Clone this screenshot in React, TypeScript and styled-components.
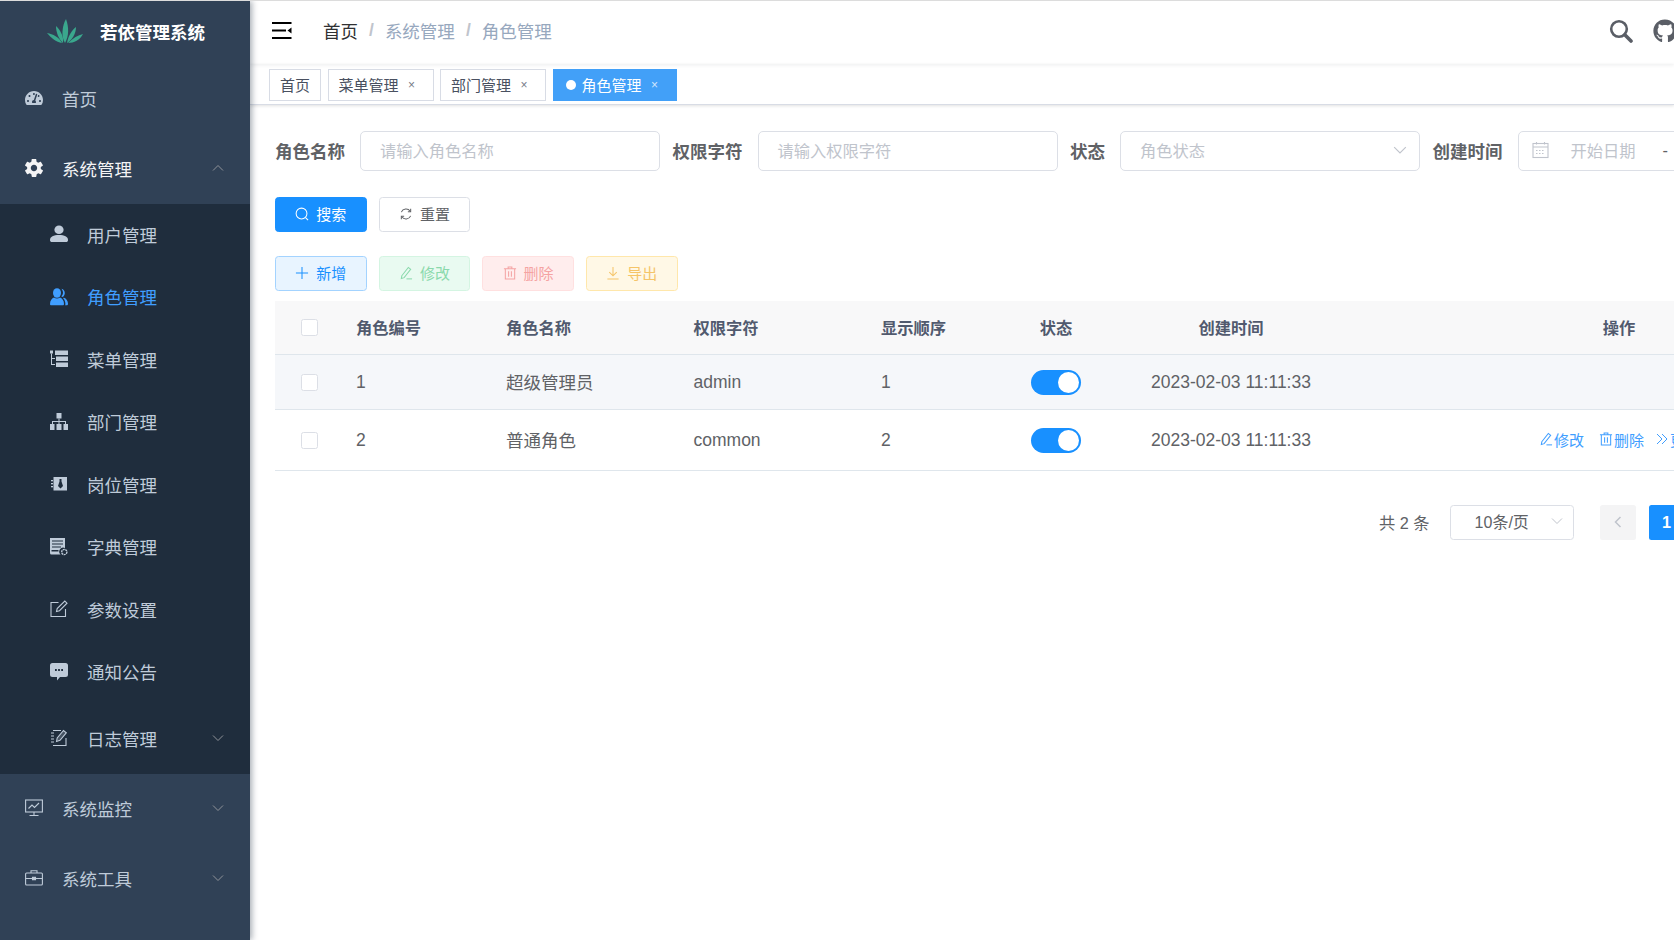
import React from "react";
import styled, { createGlobalStyle } from "styled-components";
import { FaTachometerAlt, FaGithub } from "react-icons/fa";
import { IoMdSettings } from "react-icons/io";

const GlobalStyle = createGlobalStyle`
  html, body {
    margin: 0;
    padding: 0;
    height: 100%;
    overflow: hidden;
    background: #fff;
    font-family: "Liberation Sans", "Noto Sans CJK SC", sans-serif;
  }
  * { box-sizing: border-box; }
`;

const Page = styled.div`
  display: flex;
  width: 1674px;
  height: 940px;
  overflow: hidden;
  border-top: 1px solid #dcdcdc;
`;

const Sidebar = styled.aside`
  width: 250px;
  flex: none;
  background: #304156;
  box-shadow: 2px 0 6px rgba(0, 21, 41, 0.35);
  position: relative;
  z-index: 3;
`;

const Logo = styled.div`
  height: 63px;
  display: flex;
  align-items: center;
  padding: 0 0 3px 47px;
  gap: 17px;
  color: #fff;
  font-size: 17.5px;
  font-weight: 700;
`;

const MenuRow = styled.div<{ $tall?: boolean; $sub?: boolean; $color?: string }>`
  height: ${(p) => (p.$tall ? "70px" : "62.5px")};
  display: flex;
  align-items: center;
  padding: 0 26px 2px ${(p) => (p.$sub ? "50px" : "25px")};
  font-size: 17.5px;
  color: ${(p) => p.$color || "#bfcbd9"};
`;

const MenuIcon = styled.span`
  width: 18px;
  height: 18px;
  flex: none;
  margin-right: 19px;
  display: flex;
  align-items: center;
  justify-content: center;
  color: inherit;
  svg { display: block; flex: none; }
`;

const MenuText = styled.span`
  flex: 1;
`;

const SubMenu = styled.div`
  background: #1f2d3d;
`;

const Main = styled.main`
  flex: 1;
  min-width: 0;
  overflow: hidden;
  display: flex;
  flex-direction: column;
`;

const Navbar = styled.header`
  height: 63px;
  flex: none;
  display: flex;
  align-items: center;
  padding: 0 0 4px 22px;
  box-shadow: 0 1px 4px rgba(0, 21, 41, 0.08);
  position: relative;
  z-index: 1;
`;

const Crumbs = styled.nav`
  display: flex;
  align-items: center;
  margin-left: 31px;
  font-size: 17.5px;
  color: #97a8be;
  flex: 1;
`;

const CrumbHome = styled.span`
  color: #303133;
`;

const CrumbSep = styled.span`
  color: #c0c4cc;
  font-weight: 700;
  margin: 0 11px;
`;

const NavTools = styled.div`
  display: flex;
  align-items: center;
  gap: 20px;
  color: #5a5e66;
  margin-right: -3px;
  svg { display: block; flex: none; }
`;

const TagsBar = styled.div`
  height: 41px;
  flex: none;
  display: flex;
  align-items: flex-start;
  gap: 6.5px;
  padding: 5px 0 0 19px;
  border-bottom: 1px solid #d8dce5;
  box-shadow: 0 1px 3px rgba(0, 0, 0, 0.12);
`;

const Tag = styled.div<{ $active?: boolean }>`
  height: 32px;
  display: flex;
  align-items: center;
  padding: 0 10px 1px ${(p) => (p.$active ? "12px" : "10px")};
  font-size: 15px;
  border: 1px solid ${(p) => (p.$active ? "#42a0f8" : "#d8dce5")};
  background: ${(p) => (p.$active ? "#42a0f8" : "#fff")};
  color: ${(p) => (p.$active ? "#fff" : "#495060")};
`;

const TagDot = styled.i`
  width: 10px;
  height: 10px;
  border-radius: 50%;
  background: #fff;
  margin-right: 6px;
`;

const TagClose = styled.span`
  font-size: 12px;
  margin: 0 5px 0 7px;
  width: 12px;
  text-align: center;
  opacity: 0.75;
`;

const Content = styled.section`
  padding: 26px 0 0 25px;
`;

const FilterRow = styled.div`
  display: flex;
  align-items: center;
  height: 40px;
`;

const FilterLabel = styled.label`
  font-size: 17.5px;
  font-weight: 700;
  color: #606266;
  white-space: nowrap;
  margin-right: 15px;
  padding-bottom: 2px;
`;

const FilterBox = styled.div<{ $width: number }>`
  width: ${(p) => p.$width}px;
  height: 40px;
  flex: none;
  display: flex;
  align-items: center;
  justify-content: space-between;
  padding: 0 19px 2px;
  margin-right: 12.5px;
  border: 1px solid #dcdfe6;
  border-radius: 5px;
  font-size: 16.25px;
  color: #c0c4cc;
`;

const SelectBox = styled(FilterBox)`
  padding-right: 12px;
`;

const DateBox = styled(FilterBox)`
  justify-content: flex-start;
  padding-left: 13px;
`;

const DateText = styled.span`
  margin-left: 22px;
`;

const DateDash = styled.span`
  margin-left: 27px;
  color: #606266;
`;

const ButtonRow = styled.div<{ $top: number }>`
  display: flex;
  gap: 12.2px;
  margin-top: ${(p) => p.$top}px;
`;

const palette = {
  primary: { bg: "#1890ff", border: "#1890ff", color: "#fff" },
  ghost: { bg: "#fff", border: "#dcdfe6", color: "#606266" },
  add: { bg: "#e8f4ff", border: "#a3d3ff", color: "#1890ff" },
  edit: { bg: "#e9faf1", border: "#d4f5e2", color: "#8ad9ac" },
  remove: { bg: "#ffeded", border: "#ffe0e0", color: "#f5a3a3" },
  exportFile: { bg: "#fff8e6", border: "#ffe7ab", color: "#f5c468" },
};

const Button = styled.div<{ $kind: keyof typeof palette }>`
  width: 91.5px;
  height: 35px;
  display: flex;
  align-items: center;
  justify-content: center;
  gap: 7px;
  padding-bottom: 2px;
  font-size: 15px;
  border-radius: 3.5px;
  border: 1px solid ${(p) => palette[p.$kind].border};
  background: ${(p) => palette[p.$kind].bg};
  color: ${(p) => palette[p.$kind].color};
  svg { flex: none; }
`;

const RoleTable = styled.table`
  width: 1632px;
  margin-top: 10px;
  border-collapse: collapse;
  table-layout: fixed;
`;

const HeadCell = styled.th<{ $center?: boolean }>`
  height: 53px;
  padding: 0 12.5px;
  background: #f8f8f9;
  border-bottom: 1px solid #dfe6ec;
  font-size: 16.25px;
  font-weight: 700;
  color: #515a6e;
  text-align: ${(p) => (p.$center ? "center" : "left")};
`;

const BodyRow = styled.tr<{ $height: number; $hover?: boolean }>`
  height: ${(p) => p.$height}px;
  background: ${(p) => (p.$hover ? "#f5f7fa" : "#fff")};
`;

// latin digits sit about a pixel lower in the reference than the cjk text
const Cell = styled.td<{ $center?: boolean; $latin?: boolean }>`
  padding: ${(p) => (p.$latin ? "2px 12.5px 0" : "0 12.5px 1px")};
  border-bottom: 1px solid #dfe6ec;
  font-size: 17.5px;
  color: #606266;
  white-space: nowrap;
  text-align: ${(p) => (p.$center ? "center" : "left")};
`;

const Check = styled.span`
  display: block;
  width: 17.5px;
  height: 17.5px;
  margin: 0 auto;
  background: #fff;
  border: 1px solid #dcdfe6;
  border-radius: 2.5px;
`;

const Switch = styled.span`
  display: inline-flex;
  align-items: center;
  justify-content: flex-end;
  vertical-align: middle;
  width: 50px;
  height: 25px;
  padding-right: 2px;
  border-radius: 12.5px;
  background: #1890ff;
  &::after {
    content: "";
    width: 21px;
    height: 21px;
    border-radius: 50%;
    background: #fff;
  }
`;

const Actions = styled.div`
  display: flex;
  justify-content: center;
  gap: 15px;
  padding-left: 1px;
  font-size: 15px;
  color: #409eff;
`;

const ActionLink = styled.span`
  display: flex;
  align-items: center;
  gap: 1px;
  svg { flex: none; }
`;

const MoreLink = styled(ActionLink)`
  margin-left: -3px;
`;

const Pagination = styled.div`
  display: flex;
  align-items: center;
  width: 1632px;
  height: 35px;
  margin-top: 34px;
  padding-left: 1104px;
  font-size: 16.25px;
  color: #606266;
  white-space: nowrap;
`;

const PageSize = styled.div`
  width: 124px;
  height: 35px;
  flex: none;
  margin-left: 20px;
  display: flex;
  align-items: center;
  justify-content: space-between;
  padding: 0 10px 2px 24px;
  border: 1px solid #dcdfe6;
  border-radius: 3.5px;
  font-size: 16px;
  color: #606266;
`;

const PageButton = styled.div<{ $active?: boolean }>`
  width: 36px;
  height: 35px;
  flex: none;
  display: flex;
  align-items: center;
  justify-content: center;
  border-radius: 2.5px;
  font-weight: 700;
  background: ${(p) => (p.$active ? "#1890ff" : "#f4f4f5")};
  color: ${(p) => (p.$active ? "#fff" : "#c0c4cc")};
`;

const PrevButton = styled(PageButton)`
  margin: 0 13px 0 26px;
`;

type IconProps = { size?: number };

const Chevron = ({ up, size = 12, color = "#909399" }: { up?: boolean; size?: number; color?: string }) => (
  <svg width={size} height={size} viewBox="0 0 12 12" fill="none" stroke={color} strokeWidth="1">
    <path d={up ? "M1 8.5 6 3.5l5 5" : "M1 3.5 6 8.5l5-5"} />
  </svg>
);

const LogoMark = () => (
  <svg width="36" height="26" viewBox="0 0 36 26">
    <g fill="#3aa78d">
      <path d="M18 25C14 19 15 8 19 1c3 8 3 17-1 24z" />
      <path d="M16 25C12 21 9 15 9 8c4 4 8 10 7 17z" />
      <path d="M20 25c1-6 4-12 9-16 0 7-4 13-9 16z" />
      <path d="M15 25C9 24 4 20 0 15c6 1 12 4 15 10z" />
      <path d="M21 25c5-5 10-8 15-9-3 6-9 9-15 9z" />
    </g>
  </svg>
);

const UserIcon = () => (
  <svg width="18" height="18" viewBox="0 0 18 18" fill="currentColor">
    <ellipse cx="9" cy="4.8" rx="4.6" ry="4.3" />
    <path d="M0 15c0-3.4 3.6-5 9-5s9 1.6 9 5c0 1.4-.8 2-2 2H2c-1.200 0-2-.6-2-2z" />
  </svg>
);

const PeoplesIcon = () => (
  <svg width="18" height="18" viewBox="0 0 18 18" fill="currentColor">
    <ellipse cx="7" cy="5" rx="4" ry="4.800" />
    <path d="M0 16c0-3.500 2-6 4-6.500 1.800 1.300 4.200 1.300 6 0 2 .5 4 3 4 6.500 0 .8-.5 1.300-1.300 1.300H1.300C.5 17.300 0 16.800 0 16z" />
    <path d="M11.500 .7c2 .3 3.300 2.200 3.300 4.300 0 1.700-.8 3.100-2 3.900-.5-.3-1-.5-1.500-.5 1-1 1.700-2.200 1.700-3.600 0-1.500-.6-3-1.500-4.100z" />
    <path d="M14 9.800c2.200.6 4 3.200 4 6 0 1-.6 1.500-1.500 1.500h-1.500c.3-.4.400-.8.400-1.300 0-2.400-.9-4.700-2.300-5.800.2-.1.300-.3.400-.4z" />
  </svg>
);

const TreeTableIcon = () => (
  <svg width="18" height="18" viewBox="0 0 18 18" fill="currentColor">
    <rect x="0" y="0.500" width="3" height="3" />
    <rect x="5" y="0.500" width="13" height="4.500" />
    <rect x="6" y="6.500" width="12" height="4.500" />
    <rect x="6" y="12.500" width="12" height="4.500" />
    <path d="M1 3.500h1V8h3v1H2v5h3v1H1z" />
  </svg>
);

const TreeIcon = () => (
  <svg width="18" height="18" viewBox="0 0 18 18" fill="currentColor">
    <rect x="6.500" y="0" width="5" height="5.500" />
    <path d="M8.500 5.500h1V8H16v3h-1V9H9.500v2h-1V9H3v2H2V8h6.500z" />
    <rect x="0" y="11" width="4.500" height="6" />
    <rect x="6.500" y="11" width="5" height="6" />
    <rect x="13.500" y="11" width="4.500" height="6" />
  </svg>
);

const PostIcon = () => (
  <svg width="18" height="18" viewBox="0 0 18 18" fill="currentColor">
    <path fillRule="evenodd" d="M3.500 2H17v13.500H3.500zM9.500 4v2.500L8 11l2.500 2.500L13 11l-1.500-4.500V4z" />
    <rect x="1" y="5" width="2" height="1.300" />
    <rect x="1" y="8" width="2" height="1.300" />
    <rect x="1" y="11" width="2" height="1.300" />
  </svg>
);

const DictIcon = () => (
  <svg width="18" height="18" viewBox="0 0 18 18" fill="currentColor">
    <path fillRule="evenodd" d="M0 0h15v10a4 4 0 0 0-4.500 6.500H1.500A1.500 1.500 0 0 1 0 15zM2 2.500v1h11v-1zm0 3v1h11v-1zm0 3v1h9v-1zM1.500 12v1.500h7V12z" />
    <circle cx="14.300" cy="14" r="2.600" fill="none" stroke="currentColor" strokeWidth="1.400" strokeDasharray="2 0.600" />
  </svg>
);

const EditBoxIcon = () => (
  <svg width="18" height="18" viewBox="0 0 18 18" fill="none" stroke="currentColor" strokeWidth="1.100">
    <path d="M8.500 2.500H1v14h14.500V9" />
    <path d="M6.500 11.500l.7-3L14.800 1l2.200 2.200-7.500 7.500z" />
  </svg>
);

const MessageIcon = () => (
  <svg width="18" height="18" viewBox="0 0 18 18" fill="currentColor">
    <path fillRule="evenodd" d="M2.500 0h13A2.500 2.500 0 0 1 18 2.500v9a2.500 2.500 0 0 1-2.500 2.500H10l-3 3.500V14H2.500A2.500 2.500 0 0 1 0 11.500v-9A2.500 2.500 0 0 1 2.500 0zM5 6v2h1.800V6zm3.100 0v2h1.800V6zm3.100 0v2H13V6z" />
  </svg>
);

const LogIcon = () => (
  <svg width="18" height="18" viewBox="0 0 18 18" fill="none" stroke="currentColor" strokeWidth="1.100">
    <path d="M3 1.500h8M16 9v7.500H3" />
    <path d="M1 4h3M1 7h3M1 10h3M1 13h3" />
    <path d="M6.500 12.500l.7-3.500L13.500 1.500l2.800 2.300-6.300 7.500z" fill="currentColor" fillOpacity="0.25" />
  </svg>
);

const MonitorIcon = () => (
  <svg width="18" height="18" viewBox="0 0 18 18" fill="none" stroke="currentColor" strokeWidth="1.100">
    <rect x="0.600" y="1" width="16.800" height="12" />
    <path d="M3.500 9.500 7 6l2.500 2.500L14 4" />
    <path d="M9 13v3.500M4.500 16.500h9" />
  </svg>
);

const ToolIcon = () => (
  <svg width="18" height="18" viewBox="0 0 18 18" fill="none" stroke="currentColor" strokeWidth="1.100">
    <rect x="0.600" y="4" width="16.800" height="12" rx="1" />
    <path d="M6 4V1.800h6V4M0.600 9.500h16.800" />
    <rect x="7.500" y="8.300" width="3" height="2.400" fill="currentColor" />
  </svg>
);

const Hamburger = () => (
  <svg width="20" height="17" viewBox="0 0 20 17" fill="#000">
    <rect x="0" y="0" width="19.500" height="2" />
    <rect x="0" y="7.500" width="14" height="2" />
    <rect x="0" y="15" width="19.500" height="2" />
    <path d="M19.500 5.500v6l-4-3z" />
  </svg>
);

const SearchGlyph = () => (
  <svg width="24" height="24" viewBox="0 0 24 24" fill="none" stroke="#5a5e66">
    <circle cx="10" cy="10" r="7.800" strokeWidth="2.600" />
    <path d="M15.800 15.800 22 22" strokeWidth="3.600" strokeLinecap="round" />
  </svg>
);

const ElSearch = ({ size = 14 }: IconProps) => (
  <svg width={size} height={size} viewBox="0 0 15 15" fill="none" stroke="currentColor" strokeWidth="1.100">
    <circle cx="7" cy="7" r="5.800" />
    <path d="M11.300 11.300 14 14" />
  </svg>
);

const ElRefresh = ({ size = 14 }: IconProps) => (
  <svg width={size} height={size} viewBox="0 0 15 15" fill="none" stroke="currentColor" strokeWidth="1.100">
    <path d="M2.500 5.500A5.500 5.500 0 0 1 12 4.500" />
    <path d="M12.500 9.500A5.500 5.500 0 0 1 3 10.500" />
    <path d="M12.500 2v3h-3M2.500 13v-3h3" />
  </svg>
);

const ElPlus = ({ size = 14 }: IconProps) => (
  <svg width={size} height={size} viewBox="0 0 15 15" fill="none" stroke="currentColor" strokeWidth="1.100">
    <path d="M7.500 1v13M1 7.500h13" />
  </svg>
);

const ElEdit = ({ size = 14 }: IconProps) => (
  <svg width={size} height={size} viewBox="0 0 15 15" fill="none" stroke="currentColor" strokeWidth="1.100">
    <path d="M3 10.500 10 1.500l2.500 2-7 9-3 1z" />
    <path d="M8 13.800h6" />
  </svg>
);

const ElDelete = ({ size = 14 }: IconProps) => (
  <svg width={size} height={size} viewBox="0 0 15 15" fill="none" stroke="currentColor" strokeWidth="1.100">
    <path d="M1 3h13M5.500 3V1h4v2M2.500 3v11h10V3M6 5.500v6M9 5.500v6" />
  </svg>
);

const ElDownload = ({ size = 14 }: IconProps) => (
  <svg width={size} height={size} viewBox="0 0 15 15" fill="none" stroke="currentColor" strokeWidth="1.100">
    <path d="M7.500 1v9M3.500 6.500l4 4 4-4M1.500 14h12" />
  </svg>
);

const DoubleRight = () => (
  <svg width="13" height="14" viewBox="0 0 13 14" fill="none" stroke="currentColor" strokeWidth="1">
    <path d="M1 2l5 5-5 5M6 2l5 5-5 5" />
  </svg>
);

const CalendarIcon = () => (
  <svg width="17" height="18" viewBox="0 0 17 18" fill="none" stroke="#c0c4cc" strokeWidth="1.100">
    <rect x="1" y="2.500" width="15" height="14" />
    <path d="M1 6h15M4.500 1v2.500M12.500 1v2.500" />
    <path d="M4 9.500h9M4 12.500h9" strokeDasharray="1.500 1.500" />
  </svg>
);

const submenu = [
  { label: "用户管理", icon: <UserIcon /> },
  { label: "角色管理", icon: <PeoplesIcon />, color: "#409eff" },
  { label: "菜单管理", icon: <TreeTableIcon /> },
  { label: "部门管理", icon: <TreeIcon /> },
  { label: "岗位管理", icon: <PostIcon /> },
  { label: "字典管理", icon: <DictIcon /> },
  { label: "参数设置", icon: <EditBoxIcon /> },
  { label: "通知公告", icon: <MessageIcon /> },
];

const roles = [
  { id: 1, name: "超级管理员", key: "admin", sort: 1, height: 55, hover: true, actions: false },
  { id: 2, name: "普通角色", key: "common", sort: 2, height: 61, hover: false, actions: true },
];

export default function App() {
  return (
    <Page>
      <GlobalStyle />
      <Sidebar>
        <Logo>
          <LogoMark />
          若依管理系统
        </Logo>
        <MenuRow $tall>
          <MenuIcon><FaTachometerAlt size={18} /></MenuIcon>
          <MenuText>首页</MenuText>
        </MenuRow>
        <MenuRow $tall $color="#f4f4f5">
          <MenuIcon><IoMdSettings size={22} /></MenuIcon>
          <MenuText>系统管理</MenuText>
          <Chevron up />
        </MenuRow>
        <SubMenu>
          {submenu.map((item) => (
            <MenuRow key={item.label} $sub $color={item.color}>
              <MenuIcon>{item.icon}</MenuIcon>
              <MenuText>{item.label}</MenuText>
            </MenuRow>
          ))}
          <MenuRow $tall $sub>
            <MenuIcon><LogIcon /></MenuIcon>
            <MenuText>日志管理</MenuText>
            <Chevron />
          </MenuRow>
        </SubMenu>
        <MenuRow $tall>
          <MenuIcon><MonitorIcon /></MenuIcon>
          <MenuText>系统监控</MenuText>
          <Chevron />
        </MenuRow>
        <MenuRow $tall>
          <MenuIcon><ToolIcon /></MenuIcon>
          <MenuText>系统工具</MenuText>
          <Chevron />
        </MenuRow>
      </Sidebar>

      <Main>
        <Navbar>
          <Hamburger />
          <Crumbs>
            <CrumbHome>首页</CrumbHome>
            <CrumbSep>/</CrumbSep>
            系统管理
            <CrumbSep>/</CrumbSep>
            角色管理
          </Crumbs>
          <NavTools>
            <SearchGlyph />
            <FaGithub size={24} />
          </NavTools>
        </Navbar>

        <TagsBar>
          <Tag>首页</Tag>
          <Tag>菜单管理<TagClose>×</TagClose></Tag>
          <Tag>部门管理<TagClose>×</TagClose></Tag>
          <Tag $active><TagDot />角色管理<TagClose>×</TagClose></Tag>
        </TagsBar>

        <Content>
          <FilterRow>
            <FilterLabel>角色名称</FilterLabel>
            <FilterBox $width={300}>请输入角色名称</FilterBox>
            <FilterLabel>权限字符</FilterLabel>
            <FilterBox $width={300}>请输入权限字符</FilterBox>
            <FilterLabel>状态</FilterLabel>
            <SelectBox $width={300}>角色状态<Chevron size={14} color="#c0c4cc" /></SelectBox>
            <FilterLabel>创建时间</FilterLabel>
            <DateBox $width={400}>
              <CalendarIcon />
              <DateText>开始日期</DateText>
              <DateDash>-</DateDash>
            </DateBox>
          </FilterRow>

          <ButtonRow $top={26}>
            <Button $kind="primary"><ElSearch />搜索</Button>
            <Button $kind="ghost"><ElRefresh />重置</Button>
          </ButtonRow>

          <ButtonRow $top={24}>
            <Button $kind="add"><ElPlus />新增</Button>
            <Button $kind="edit"><ElEdit />修改</Button>
            <Button $kind="remove"><ElDelete />删除</Button>
            <Button $kind="exportFile"><ElDownload />导出</Button>
          </ButtonRow>

          <RoleTable>
            <colgroup>
              <col width="68.5" />
              <col width="150" />
              <col width="187.5" />
              <col width="187.5" />
              <col width="112.5" />
              <col width="150" />
              <col width="200" />
              <col width="576" />
            </colgroup>
            <thead>
              <tr>
                <HeadCell><Check /></HeadCell>
                <HeadCell>角色编号</HeadCell>
                <HeadCell>角色名称</HeadCell>
                <HeadCell>权限字符</HeadCell>
                <HeadCell>显示顺序</HeadCell>
                <HeadCell $center>状态</HeadCell>
                <HeadCell $center>创建时间</HeadCell>
                <HeadCell $center>操作</HeadCell>
              </tr>
            </thead>
            <tbody>
              {roles.map((role) => (
                <BodyRow key={role.id} $height={role.height} $hover={role.hover}>
                  <Cell $latin><Check /></Cell>
                  <Cell $latin>{role.id}</Cell>
                  <Cell>{role.name}</Cell>
                  <Cell $latin>{role.key}</Cell>
                  <Cell $latin>{role.sort}</Cell>
                  <Cell $latin $center><Switch /></Cell>
                  <Cell $latin $center>2023-02-03 11:11:33</Cell>
                  <Cell $center>
                    {role.actions && (
                      <Actions>
                        <ActionLink><ElEdit />修改</ActionLink>
                        <ActionLink><ElDelete />删除</ActionLink>
                        <MoreLink><DoubleRight />更多</MoreLink>
                      </Actions>
                    )}
                  </Cell>
                </BodyRow>
              ))}
            </tbody>
          </RoleTable>

          <Pagination>
            共 2 条
            <PageSize>10条/页<Chevron size={12} color="#c0c4cc" /></PageSize>
            <PrevButton><svg width="12" height="14" viewBox="0 0 12 14" fill="none" stroke="currentColor" strokeWidth="1.500"><path d="M8.500 2 3.500 7l5 5" /></svg></PrevButton>
            <PageButton $active>1</PageButton>
          </Pagination>
        </Content>
      </Main>
    </Page>
  );
}
